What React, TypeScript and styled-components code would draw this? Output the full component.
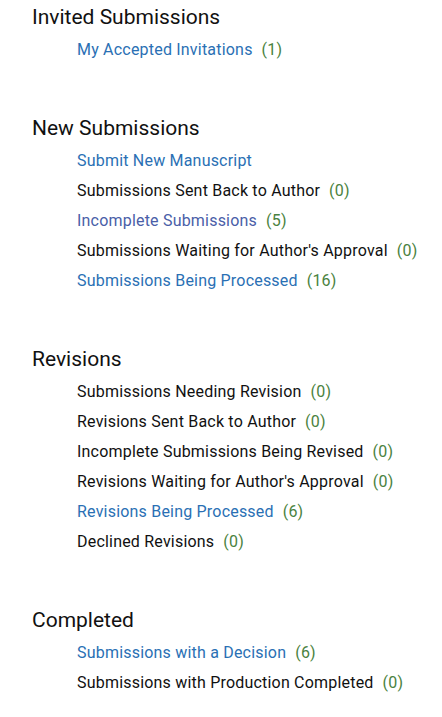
import styled, { createGlobalStyle } from 'styled-components';

const GlobalStyle = createGlobalStyle`
  body {
    margin: 0;
    background: #ffffff;
    font-family: Roboto, "Liberation Sans", Arial, sans-serif;
  }
`;

type Item = { label: string; count?: number; kind: 'link' | 'visited' | 'plain' };

const sections: { title: string; items: Item[] }[] = [
  {
    title: 'Invited Submissions',
    items: [{ label: 'My Accepted Invitations', count: 1, kind: 'link' }],
  },
  {
    title: 'New Submissions',
    items: [
      { label: 'Submit New Manuscript', kind: 'link' },
      { label: 'Submissions Sent Back to Author', count: 0, kind: 'plain' },
      { label: 'Incomplete Submissions', count: 5, kind: 'visited' },
      { label: "Submissions Waiting for Author's Approval", count: 0, kind: 'plain' },
      { label: 'Submissions Being Processed', count: 16, kind: 'link' },
    ],
  },
  {
    title: 'Revisions',
    items: [
      { label: 'Submissions Needing Revision', count: 0, kind: 'plain' },
      { label: 'Revisions Sent Back to Author', count: 0, kind: 'plain' },
      { label: 'Incomplete Submissions Being Revised', count: 0, kind: 'plain' },
      { label: "Revisions Waiting for Author's Approval", count: 0, kind: 'plain' },
      { label: 'Revisions Being Processed', count: 6, kind: 'link' },
      { label: 'Declined Revisions', count: 0, kind: 'plain' },
    ],
  },
  {
    title: 'Completed',
    items: [
      { label: 'Submissions with a Decision', count: 6, kind: 'link' },
      { label: 'Submissions with Production Completed', count: 0, kind: 'plain' },
    ],
  },
];

const App = () => {
  return (
    <Page>
      <GlobalStyle />
      {sections.map((s) => (
        <Section key={s.title}>
          <Heading>{s.title}</Heading>
          <List>
            {s.items.map((it) => (
              <Row key={it.label}>
                <Label kind={it.kind}>{it.label}</Label>
                {it.count !== undefined && <Count>({it.count})</Count>}
              </Row>
            ))}
          </List>
        </Section>
      ))}
    </Page>
  );
};

export default App;

const Page = styled.div`
  padding: 5px 0 0 32px;
  display: flex;
  flex-direction: column;
  gap: 52px;
`;

const Section = styled.section`
  display: flex;
  flex-direction: column;
  gap: 5px;
`;

const Heading = styled.h2`
  margin: 0;
  font-size: 21px;
  font-weight: 400;
  line-height: 24px;
  color: #111111;
`;

const List = styled.ul`
  margin: 0;
  padding: 0 0 0 45px;
  list-style: none;
`;

const Row = styled.li`
  height: 30px;
  display: flex;
  align-items: center;
  font-size: 16px;
  letter-spacing: 0.2px;
`;

const Label = styled.span<{ kind: Item['kind'] }>`
  color: ${(p) => (p.kind === 'link' ? '#2a70b4' : p.kind === 'visited' ? '#4a5ea8' : '#111111')};
  cursor: ${(p) => (p.kind === 'plain' ? 'default' : 'pointer')};
`;

const Count = styled.span`
  margin-left: 9px;
  color: #4a8240;
`;
